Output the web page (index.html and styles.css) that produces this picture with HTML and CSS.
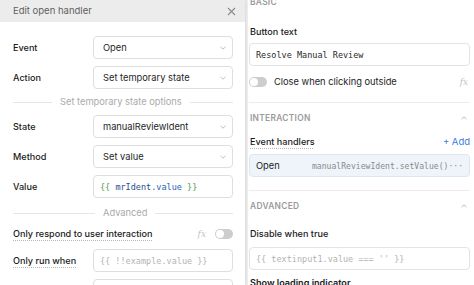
FILE: index.html
```html
<!DOCTYPE html>
<html>
<head>
<meta charset="utf-8">
<link rel="stylesheet" href="styles.css">
</head>
<body>
<div class="app">
  <div class="popover">
    <div class="pop-head">
      <span class="pop-title">Edit open handler</span>
      <svg class="close" width="9" height="9" viewBox="0 0 9 9"><path d="M1 1L8 8M8 1L1 8" stroke="#8a8a8a" stroke-width="1.1"/></svg>
    </div>
    <div class="pop-body">
      <div class="row">
        <span class="label">Event</span>
        <div class="select"><span>Open</span><svg class="chev" width="6" height="4" viewBox="0 0 6 4"><path d="M0.5 0.8L3 3.2L5.5 0.8" fill="none" stroke="#b5b5b5" stroke-width="0.9"/></svg></div>
      </div>
      <div class="row">
        <span class="label">Action</span>
        <div class="select"><span>Set temporary state</span><svg class="chev" width="6" height="4" viewBox="0 0 6 4"><path d="M0.5 0.8L3 3.2L5.5 0.8" fill="none" stroke="#b5b5b5" stroke-width="0.9"/></svg></div>
      </div>
      <div class="divider"><span>Set temporary state options</span></div>
      <div class="row">
        <span class="label">State</span>
        <div class="select"><span>manualReviewIdent</span><svg class="chev" width="6" height="4" viewBox="0 0 6 4"><path d="M0.5 0.8L3 3.2L5.5 0.8" fill="none" stroke="#b5b5b5" stroke-width="0.9"/></svg></div>
      </div>
      <div class="row">
        <span class="label">Method</span>
        <div class="select"><span>Set value</span><svg class="chev" width="6" height="4" viewBox="0 0 6 4"><path d="M0.5 0.8L3 3.2L5.5 0.8" fill="none" stroke="#b5b5b5" stroke-width="0.9"/></svg></div>
      </div>
      <div class="row">
        <span class="label">Value</span>
        <div class="code-input"><span class="code"><span class="brace">{{</span> <span class="ident">mrIdent</span><span class="prop">.value</span> <span class="brace">}}</span></span></div>
      </div>
      <div class="divider adv"><span>Advanced</span></div>
      <div class="row toggle-row">
        <span class="label dotted">Only respond to user interaction</span>
        <span class="fx">fx</span>
        <span class="toggle"></span>
      </div>
      <div class="row">
        <span class="label dotted">Only run when</span>
        <div class="code-input placeholder"><span class="code">{{ !!example.value }}</span></div>
      </div>
      <div class="row">
        <span class="label"></span>
        <div class="code-input"></div>
      </div>
    </div>
  </div>
  <div class="gutter"></div>
  <div class="inspector">
    <div class="sec-head top"><span>BASIC</span></div>
    <div class="field-label first">Button text</div>
    <div class="text-input">Resolve Manual Review</div>
    <div class="switch-row">
      <span class="toggle"></span>
      <span class="switch-label">Close when clicking outside</span>
      <span class="fx">fx</span>
    </div>
    <div class="sep"></div>
    <div class="sec-head"><span>INTERACTION</span><svg class="chev-up" width="6" height="4" viewBox="0 0 6 4"><path d="M0.5 3.2L3 0.8L5.5 3.2" fill="none" stroke="#b5b5b5" stroke-width="0.9"/></svg></div>
    <div class="handlers-head">
      <span class="field-label dotted">Event handlers</span>
      <span class="add">+ Add</span>
    </div>
    <div class="handler">
      <span class="h-event">Open</span>
      <span class="h-code">manualReviewIdent.setValue()···</span>
    </div>
    <div class="sep"></div>
    <div class="sec-head"><span>ADVANCED</span><svg class="chev-up" width="6" height="4" viewBox="0 0 6 4"><path d="M0.5 3.2L3 0.8L5.5 3.2" fill="none" stroke="#b5b5b5" stroke-width="0.9"/></svg></div>
    <div class="field-label dis">Disable when true</div>
    <div class="text-input placeholder dis-input">{{ textinput1.value === '' }}</div>
    <div class="field-label show">Show loading indicator</div>
  </div>
</div>
</body>
</html>
```

FILE: styles.css
```css
* { box-sizing: border-box; }
html, body { margin: 0; padding: 0; background: #fff; }
body {
  font-family: Inter, "Noto Sans", sans-serif;
  font-size: 9.3px;
  line-height: 12px;
  color: #1d1d1d;
  width: 474px;
  height: 285px;
  overflow: hidden;
}
.app {
  display: flex;
  height: 285px;
  overflow: hidden;
}
.popover {
  width: 245px;
  flex: none;
  background: #fff;
  box-shadow: 1px 0 3px rgba(0,0,0,0.12);
  position: relative;
  z-index: 1;
}
.pop-head {
  height: 22px;
  background: #ececec;
  display: flex;
  align-items: center;
  justify-content: space-between;
  padding: 0 9px 0 13px;
}
.pop-title { color: #5f5f5f; font-size: 9.5px; }
.pop-body {
  padding: 14px 12px 0 13px;
  display: flex;
  flex-direction: column;
  gap: 7px;
}
.row {
  display: flex;
  align-items: center;
  height: 23px;
  flex: none;
}
.label {
  width: 80px;
  flex: none;
  font-size: 9.1px;
  font-weight: 500;
  color: #1a1a1a;
}
.dotted {
  text-decoration: underline dotted #b8b8b8;
  text-underline-offset: 3px;
}
.select, .code-input {
  flex: 1;
  height: 23px;
  border: 1px solid #dedede;
  border-radius: 4px;
  display: flex;
  align-items: center;
  justify-content: space-between;
  padding: 0 6px 0 9px;
  font-size: 9.3px;
  color: #1f1f1f;
}
.code-input {
  justify-content: flex-start;
  font-family: "DejaVu Sans Mono", monospace;
  font-size: 8.5px;
  padding-left: 6px;
}
.code { white-space: pre; }
.code-input.placeholder, .text-input.placeholder { color: #b3b3b3; }
.brace { color: #4f9a55; }
.ident { color: #244f8a; }
.prop { color: #2663b5; }
.divider {
  display: flex;
  align-items: center;
  gap: 8px;
  height: 12px;
  flex: none;
  color: #aaa;
  font-size: 9.3px;
}
.divider::before, .divider::after {
  content: "";
  height: 1px;
  background: #e6e6e6;
}
.divider::before { width: 39px; }
.divider::after { flex: 1; }
.divider.adv { margin-top: 2px; }
.divider.adv::before { width: 82px; }
.toggle-row { height: 16px; }
.toggle-row .label { width: auto; flex: 1; }
.fx {
  font-family: "DejaVu Serif", serif;
  font-style: italic;
  color: #c4c4c4;
  font-size: 9px;
  margin-right: 9px;
}
.toggle {
  width: 18px;
  height: 10px;
  border-radius: 5px;
  background: #cdcdcd;
  position: relative;
  flex: none;
}
.toggle::after {
  content: "";
  position: absolute;
  left: 1px;
  top: 1px;
  width: 8px;
  height: 8px;
  border-radius: 50%;
  background: #fff;
}
.gutter {
  width: 3px;
  flex: none;
  background: #f1f1f1;
}
.inspector {
  flex: 1;
  padding: 0 4px 0 1px;
  display: flex;
  flex-direction: column;
}
.sec-head {
  display: flex;
  align-items: center;
  justify-content: space-between;
  height: 14px;
  flex: none;
  padding: 0 1px;
  color: #9a9a9a;
  font-size: 8.4px;
  font-weight: 600;
  letter-spacing: 0.3px;
}
.sec-head.top { margin-top: -5px; }
.chev-up { margin-right: 2px; }
.field-label {
  font-size: 9.1px;
  font-weight: 500;
  height: 12px;
  flex: none;
  color: #1a1a1a;
  padding-left: 1px;
}
.field-label.first { margin-top: 17px; }
.text-input {
  margin-top: 5px;
  height: 23px;
  flex: none;
  border: 1px solid #e3e3e3;
  border-radius: 4px;
  display: flex;
  align-items: center;
  padding: 0 6px;
  font-family: "DejaVu Sans Mono", monospace;
  font-size: 8.5px;
  color: #2a2a2a;
  white-space: pre;
}
.switch-row {
  display: flex;
  align-items: center;
  height: 12px;
  flex: none;
  margin-top: 10px;
}
.switch-label { flex: 1; margin-left: 7px; font-size: 9.3px; }
.switch-row .fx { margin-right: 2px; }
.sep {
  height: 1px;
  flex: none;
  background: #ececec;
  margin: 14px 0 8px;
}
.handler + .sep { margin-top: 13px; }
.handlers-head {
  display: flex;
  align-items: center;
  justify-content: space-between;
  height: 12px;
  flex: none;
  margin-top: 11px;
}
.add { color: #3b7ddd; font-size: 9.5px; }
.handler {
  margin-top: 6px;
  height: 23px;
  flex: none;
  border: 1px solid #dde6f0;
  background: #eff4fa;
  border-radius: 4px;
  display: flex;
  align-items: center;
  padding: 0 6px;
}
.h-event { width: 56px; font-size: 9.3px; }
.h-code {
  font-family: "DejaVu Sans Mono", monospace;
  font-size: 8.1px;
  color: #8a8a8a;
  white-space: pre;
}
.field-label.dis { margin-top: 15px; }
.dis-input { margin-top: 7px; }
.field-label.show { margin-top: 7px; font-weight: 600; }
```
